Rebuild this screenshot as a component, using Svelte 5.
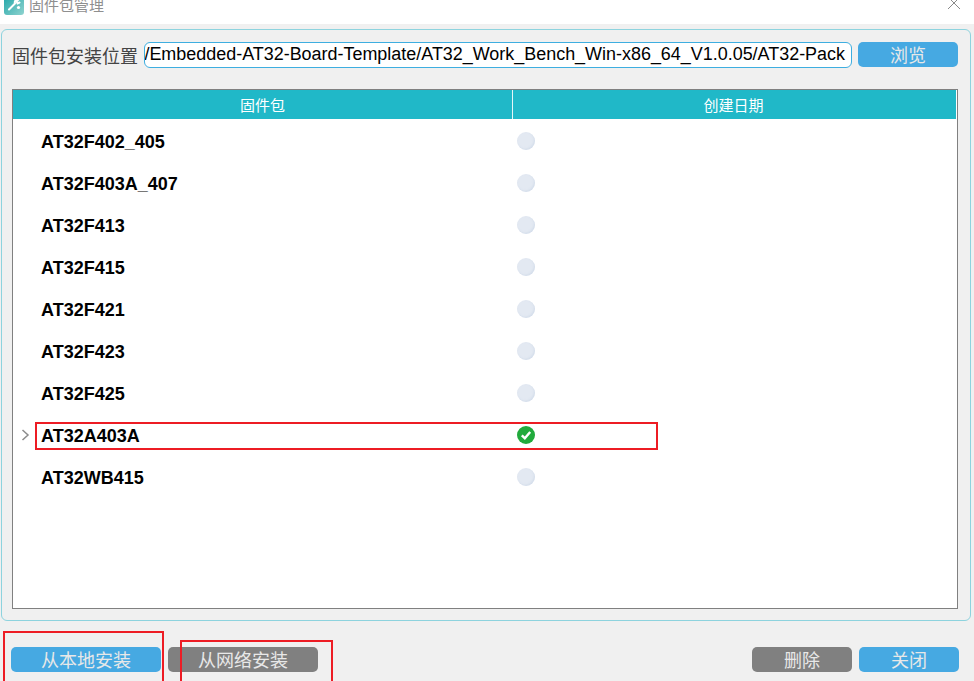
<script>
  const packs = [
    { name: 'AT32F402_405', installed: false },
    { name: 'AT32F403A_407', installed: false },
    { name: 'AT32F413', installed: false },
    { name: 'AT32F415', installed: false },
    { name: 'AT32F421', installed: false },
    { name: 'AT32F423', installed: false },
    { name: 'AT32F425', installed: false },
    { name: 'AT32A403A', installed: true },
    { name: 'AT32WB415', installed: false }
  ];
  const path = 'D:/Embedded-AT32-Board-Template/AT32_Work_Bench_Win-x86_64_V1.0.05/AT32-Pack';
</script>

<div class="window">
  <div class="titlebar">
    <svg class="app-icon" viewBox="0 0 20 20" width="20" height="20">
      <defs>
        <linearGradient id="tile" x1="0" y1="0" x2="1" y2="1">
          <stop offset="0" stop-color="#1fa5a8" />
          <stop offset="1" stop-color="#8fd3cf" />
        </linearGradient>
      </defs>
      <rect width="20" height="20" rx="3" fill="url(#tile)" />
      <path d="M5 14.5 L11 8.5 M11 8.5 a3 3 0 0 1 3.5 -4 l-2 2 l1 2 l2 -1" fill="none" stroke="#fff" stroke-width="2" stroke-linecap="round" />
      <circle cx="14.5" cy="12.5" r="1.6" fill="#fff" />
    </svg>
    <span class="title">固件包管理</span>
    <svg class="close" viewBox="0 0 14 14" width="14" height="14">
      <path d="M1 1 L13 13 M13 1 L1 13" stroke="#8a8a8a" stroke-width="1" fill="none" />
    </svg>
  </div>

  <div class="panel">
    <div class="path-row">
      <span class="path-label">固件包安装位置</span>
      <div class="path-input"><span>{path}</span></div>
      <button class="btn blue browse">浏览</button>
    </div>

    <div class="table">
      <div class="thead">
        <div class="th first">固件包</div>
        <div class="th">创建日期</div>
      </div>
      {#each packs as pack}
        <div class="row">
          <div class="name-cell">
            {#if pack.installed}
              <svg class="chevron" viewBox="0 0 9 12" width="9" height="12">
                <path d="M1.5 1 L7 6 L1.5 11" fill="none" stroke="#8c8c8c" stroke-width="1.5" />
              </svg>
            {/if}
            <span class="name">{pack.name}</span>
          </div>
          <div class="date-cell">
            {#if pack.installed}
              <svg viewBox="0 0 18 18" width="18" height="18">
                <circle cx="9" cy="9" r="9" fill="#21aa3c" />
                <path d="M4.8 9.4 L7.8 12.2 L13.2 6" fill="none" stroke="#fff" stroke-width="2.4" />
              </svg>
            {:else}
              <span class="dot"></span>
            {/if}
          </div>
          {#if pack.installed}
            <div class="mark row-mark"></div>
          {/if}
        </div>
      {/each}
    </div>
  </div>

  <div class="footer">
    <div class="group">
      <button class="btn blue wide">从本地安装</button>
      <button class="btn gray wide">从网络安装</button>
    </div>
    <div class="group">
      <button class="btn gray">删除</button>
      <button class="btn blue">关闭</button>
    </div>
    <div class="mark local-mark"></div>
    <div class="mark net-mark"></div>
  </div>
</div>

<style>
  :global(body) {
    margin: 0;
    background: #f0f0f0;
  }
  .window {
    width: 974px;
    height: 681px;
    overflow: hidden;
    background: #f0f0f0;
    font-family: "Noto Sans CJK SC", "Liberation Sans", sans-serif;
  }
  .titlebar {
    height: 24px;
    box-sizing: border-box;
    background: #fff;
    display: flex;
    align-items: flex-end;
    padding: 0 13px 9px 4px;
    overflow: hidden;
  }
  .app-icon {
    flex: none;
  }
  .title {
    margin-left: 5px;
    font-size: 15px;
    line-height: 20px;
    color: #8f8f8f;
  }
  .close {
    margin-left: auto;
    flex: none;
    margin-bottom: 5px;
  }
  .panel {
    margin: 5px 3px 0 1px;
    height: 592px;
    box-sizing: border-box;
    border: 1px solid #8dd3de;
    border-radius: 6px;
    padding: 11px 11px 11px 10px;
  }
  .path-row {
    display: flex;
    align-items: center;
    height: 27px;
  }
  .path-label {
    width: 132px;
    font-size: 18px;
    color: #444;
    white-space: nowrap;
  }
  .path-input {
    width: 708px;
    height: 26px;
    box-sizing: border-box;
    background: #fff;
    border: 1px solid #3eaee0;
    border-radius: 6px;
    padding: 0 6px;
    display: flex;
    justify-content: flex-end;
    align-items: center;
    overflow: hidden;
    white-space: nowrap;
    font-family: "Liberation Sans", sans-serif;
    font-size: 17.95px;
    color: #000;
  }
  .btn {
    width: 100px;
    height: 25px;
    padding: 0;
    border: none;
    border-radius: 5px;
    color: #e8e8e8;
    font-family: "Noto Sans CJK SC", sans-serif;
    font-size: 18px;
    line-height: 25px;
  }
  .blue {
    background: #46a9e2;
  }
  .gray {
    background: #808080;
  }
  .wide {
    width: 150px;
  }
  .browse {
    margin-left: 6px;
  }
  .table {
    margin-top: 21px;
    width: 946px;
    height: 520px;
    box-sizing: border-box;
    background: #fff;
    border: 1px solid #808080;
  }
  .thead {
    display: flex;
    height: 29px;
    margin: 0 1px 1px 0;
    background: #20b8c8;
    color: #fff;
    font-size: 15px;
  }
  .th {
    flex: 1;
    display: flex;
    align-items: center;
    justify-content: center;
    padding-right: 2px;
  }
  .th.first {
    flex: none;
    width: 499px;
    padding-right: 0;
    border-right: 1px solid #e4f6f8;
  }
  .row {
    position: relative;
    display: flex;
    height: 42px;
    align-items: center;
  }
  .name-cell {
    position: relative;
    flex: none;
    width: 504px;
    padding-left: 28px;
    box-sizing: border-box;
  }
  .name {
    font-family: "Liberation Sans", sans-serif;
    font-weight: 700;
    font-size: 18px;
    color: #000;
  }
  .chevron {
    position: absolute;
    left: 8px;
    top: 6px;
  }
  .date-cell {
    display: flex;
    align-items: center;
    height: 18px;
  }
  .dot {
    display: block;
    width: 18px;
    height: 18px;
    margin-top: -1px;
    border-radius: 50%;
    background: #e3e9f2;
    box-shadow: inset -1px -1px 2px rgba(190, 205, 225, 0.4);
  }
  .footer {
    position: relative;
    display: flex;
    justify-content: space-between;
    padding: 26px 15px 0 11px;
  }
  .group {
    display: flex;
    gap: 7px;
  }
  .mark {
    position: absolute;
    box-sizing: border-box;
    border: 2px solid #ed1c24;
  }
  .row-mark {
    left: 22px;
    top: 8px;
    width: 623px;
    height: 28px;
  }
  .local-mark {
    left: 3px;
    top: 10px;
    width: 161px;
    height: 60px;
  }
  .net-mark {
    left: 180px;
    top: 19px;
    width: 153px;
    height: 60px;
  }
</style>
